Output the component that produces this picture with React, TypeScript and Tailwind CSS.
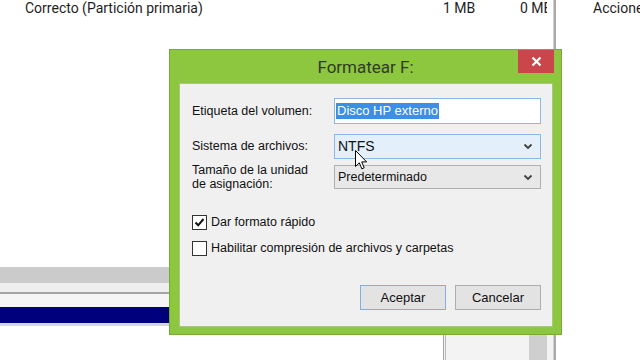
import React from "react";

const dlgFont = { fontFamily: '"Liberation Sans", Arial, sans-serif' };

function Chevron() {
  return (
    <svg width="10" height="7" viewBox="0 0 10 7" className="shrink-0">
      <path d="M1.5 1.5 L5 5 L8.5 1.5" fill="none" stroke="#404040" strokeWidth="1.8" />
    </svg>
  );
}

function Checkbox({ checked }: { checked?: boolean }) {
  return (
    <div className="w-[15px] h-[15px] bg-white border border-[#333333] flex items-center justify-center shrink-0">
      {checked && (
        <svg width="13" height="13" viewBox="0 0 13 13">
          <path d="M2.5 6.5 L5.2 9.3 L10.5 3" fill="none" stroke="#111" strokeWidth="2" />
        </svg>
      )}
    </div>
  );
}

export default function App() {
  return (
    <div
      className="relative w-[640px] h-[360px] overflow-hidden bg-white flex"
      style={{ fontFamily: 'Roboto, "Noto Sans", sans-serif' }}
    >
      {/* main area */}
      <div className="w-[553px] flex flex-col overflow-hidden">
        <div className="h-[20px] flex text-[14px] leading-[16px] text-[#1e1e1e] whitespace-nowrap">
          <span className="pl-[25px] w-[443px]">Correcto (Partición primaria)</span>
          <span className="w-[77px]">1 MB</span>
          <span className="w-[27px] overflow-hidden">0 MB</span>
        </div>
        <div className="flex-1" />
        <div className="h-[16px] bg-[#cbcbcb]" />
        <div className="h-[77px] flex">
          <div className="flex-1 flex flex-col">
            <div className="h-[9px] bg-[#eeeeee]" />
            <div className="h-[2px] bg-[#a3a3a3]" />
            <div className="h-[13px] bg-[#f5f5f5]" />
            <div className="h-[16px] bg-[#00007c]" />
            <div className="h-[3px] bg-[#d3d7e4]" />
            <div className="flex-1 bg-white" />
          </div>
          <div className="w-[110px] flex border-l border-[#a8a8a8]">
            <div className="w-[2px] bg-[#f2f2f2] border-r border-[#b8b8b8]" />
            <div className="flex-1 bg-[#f3f3f3]" />
            <div className="w-[18px] bg-[#cfcfcf]" />
            <div className="w-[6px] bg-[#f3f3f3]" />
          </div>
        </div>
      </div>
      {/* divider */}
      <div className="w-[3px] bg-[#a9a9a9] border-l border-[#d0d0d0]" />
      {/* actions panel */}
      <div className="flex-1 pl-[37px] text-[14px] leading-[16px] text-[#1e1e1e] whitespace-nowrap overflow-hidden">
        Acciones
      </div>

      {/* dialog */}
      <div className="absolute left-[169px] top-[49px] w-[393px] h-[286px] bg-[#8dc63f] border border-[#78aa36] flex flex-col">
        <div className="h-[33px] relative flex items-center justify-center pt-[3px]">
          <span className="text-[17px] text-[#2f3b26]" style={{ fontFamily: 'Roboto, "Noto Sans", sans-serif' }}>
            Formatear F:
          </span>
          <div className="absolute right-[7px] top-0 w-[36px] h-[23px] bg-[#c9474b] flex items-center justify-center">
            <svg width="11" height="11" viewBox="0 0 11 11">
              <path d="M1.5 1.5 L9.5 9.5 M9.5 1.5 L1.5 9.5" stroke="#fff" strokeWidth="2.2" />
            </svg>
          </div>
        </div>
        <div
          className="ml-[9px] mr-[8px] mb-[7px] flex-1 bg-[#f0f0f0] border border-[#a9c77f] flex flex-col pl-[12px] pr-[11px] pt-[14px] text-[12.5px] text-[#111] whitespace-nowrap"
          style={dlgFont}
        >
          <div className="flex h-[26px] items-center">
            <span className="w-[142px]">Etiqueta del volumen:</span>
            <div className="flex-1 h-full bg-white border border-[#8fb8e4] flex items-center pl-[1px]">
              <span className="bg-[#3c8ee6] text-white leading-[16px] px-[1px] text-[13px]">Disco HP externo</span>
            </div>
          </div>
          <div className="flex h-[25px] items-center mt-[10px]">
            <span className="w-[142px]">Sistema de archivos:</span>
            <div className="flex-1 h-full bg-[#e3effa] border border-[#8cb8e6] flex items-center pl-[3px] pr-[7px]">
              <span className="flex-1 text-[14px]">NTFS</span>
              <Chevron />
            </div>
          </div>
          <div className="flex h-[24px] items-center mt-[6px]">
            <span className="w-[142px] leading-[14px]">
              Tamaño de la unidad
              <br />
              de asignación:
            </span>
            <div className="flex-1 h-full bg-[#e8e8e8] border border-[#b0b0b0] flex items-center pl-[3px] pr-[7px]">
              <span className="flex-1">Predeterminado</span>
              <Chevron />
            </div>
          </div>
          <div className="flex items-center gap-[4px] mt-[26px] h-[15px]">
            <Checkbox checked />
            <span>Dar formato rápido</span>
          </div>
          <div className="flex items-center gap-[4px] mt-[11px] h-[15px]">
            <Checkbox />
            <span>Habilitar compresión de archivos y carpetas</span>
          </div>
          <div className="flex justify-end gap-[9px] mt-[29px] text-[13px]">
            <div className="w-[86px] h-[25px] bg-[#e3e3e3] border border-[#7fb0e0] flex items-center justify-center">
              Aceptar
            </div>
            <div className="w-[86px] h-[25px] bg-[#e3e3e3] border border-[#adadad] flex items-center justify-center">
              Cancelar
            </div>
          </div>
        </div>
      </div>

      {/* mouse cursor */}
      <svg className="absolute left-[355px] top-[150px]" width="13" height="21" viewBox="0 0 13 21">
        <path
          d="M0.5 0.5 L0.5 16.5 L4.3 12.8 L6.8 18.8 L9.2 17.8 L6.7 11.9 L11.6 11.9 Z"
          fill="#fff"
          stroke="#000"
          strokeWidth="1"
        />
      </svg>
    </div>
  );
}
